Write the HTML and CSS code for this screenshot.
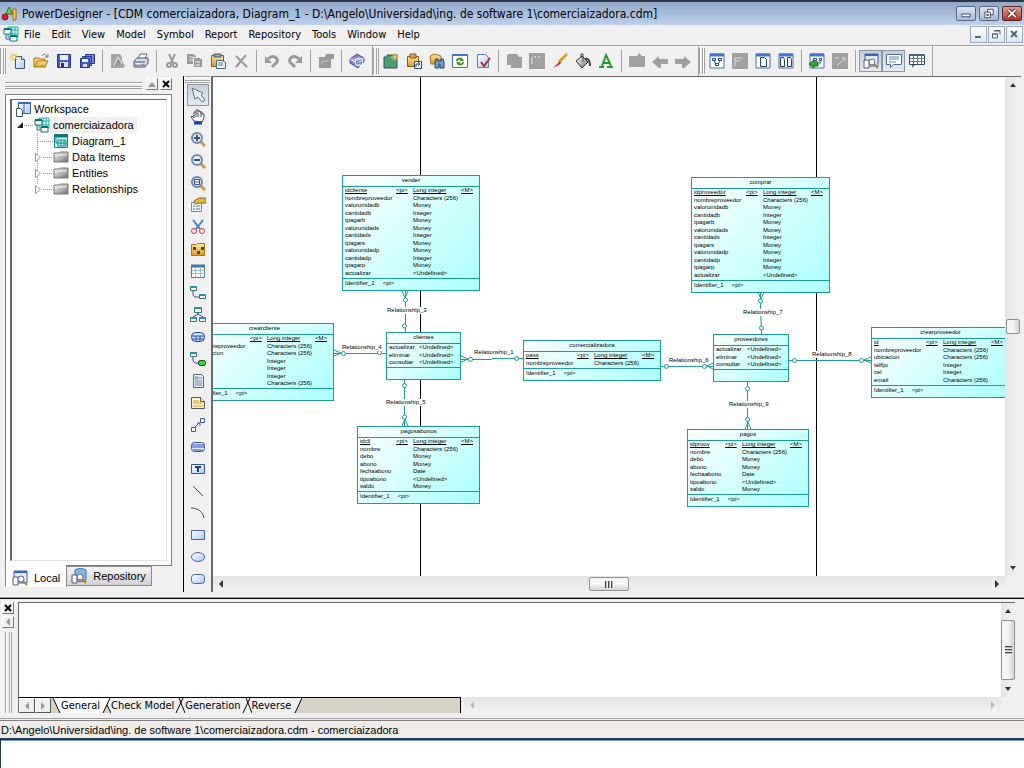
FILE: index.html
```html
<!doctype html>
<html lang="en">
<head>
<meta charset="utf-8">
<title>PowerDesigner</title>
<link rel="stylesheet" href="styles.css">
</head>

<body>
    <!-- gradients and shapes used more than once -->
    <svg class="defs" width="0" height="0">
        <defs>
            <linearGradient id="blue" x1="0" y1="0" x2="1" y2="1"><stop offset="0" stop-color="#fff"/><stop offset="1" stop-color="#a9c8f8"/></linearGradient>
            <linearGradient id="grey" x1="0" y1="0" x2="1" y2="1"><stop offset="0" stop-color="#fff"/><stop offset="1" stop-color="#707070"/></linearGradient>
            <linearGradient id="gold" x1="0" y1="0" x2="0" y2="1"><stop offset="0" stop-color="#ffe9a0"/><stop offset="1" stop-color="#d89a20"/></linearGradient>
            <symbol id="folder" viewBox="0 0 16 16"><path d="M1 4h5l1-1h8v10H1z" fill="url(#grey)" stroke="#777"/><path d="M2 6h12" stroke="#eee"/></symbol>
            <symbol id="model" viewBox="0 0 16 16"><path d="M5 1h10v10H5z" fill="#e4ffff" stroke="#2aa"/><path d="M5 4h10M5 8h10M9 1v10M12 1v10" stroke="#2aa"/><path d="M1 3h7v5H1zM7 10h7v5H7z" fill="#fff" stroke="#177"/><path d="M1 3h7M7 10h7" stroke="#077" stroke-width="2"/><path d="M3 8v5h4" fill="none" stroke="#35a"/></symbol>
            <symbol id="look" viewBox="0 0 16 16"><path d="M2 1h13v12H2z" fill="#dfeafc" stroke="#3a5fae"/><path d="M2 2h13" stroke="#3566d0" stroke-width="2"/><path d="M1 7h5v8H1z" fill="#fff" stroke="#557"/><circle cx="9" cy="9" r="3" fill="#eef8ff" stroke="#667"/><path d="M11 11l4 4" stroke="#b8792a" stroke-width="2"/></symbol>
            <symbol id="zoom" viewBox="0 0 16 16"><path d="M10 10l5 5" stroke="#c89b3c" stroke-width="3"/><circle cx="7" cy="7" r="5" fill="#e3f0ff" stroke="#7486a8" stroke-width="2"/></symbol>
            <symbol id="win" viewBox="0 0 16 16"><path d="M1 1h14v14H1z" fill="#fff" stroke="#4a6cb4"/><path d="M1 2h14" stroke="#3f74d8" stroke-width="3"/></symbol>
        </defs>
    </svg>

    <header class="title-bar">
        <svg class="icon" viewBox="0 0 16 16"><path d="M5 8l3-7 4 7z" fill="#7c4" stroke="#272"/><circle cx="4" cy="11" r="3" fill="#d22" stroke="#811"/><path d="M12 3h3v11h-3z" fill="#fc5" stroke="#a60"/></svg>
        <h1>PowerDesigner - [CDM comerciaizadora, Diagram_1 - D:\Angelo\Universidad\ing. de software 1\comerciaizadora.cdm]</h1>
        <div class="win-buttons">
            <button title="Minimize"><svg viewBox="0 0 18 14"><path d="M4.500 7.500h9v3h-9z" fill="#fff" stroke="#445"/></svg></button>
            <button title="Restore"><svg viewBox="0 0 18 14"><path d="M7.500 2.500h6v6h-6z" fill="#fff" stroke="#445"/><path d="M4.500 5.500h6v6h-6zM6.500 8h2v1h-2z" fill="#fff" stroke="#445"/></svg></button>
            <button class="close" title="Close"><svg viewBox="0 0 18 14"><path d="M5 3l8 8M13 3l-8 8" stroke="#522" stroke-width="4"/><path d="M5 3l8 8M13 3l-8 8" stroke="#fff" stroke-width="2"/></svg></button>
        </div>
    </header>

    <nav class="menu">
        <svg class="icon"><use href="#model"/></svg>
        <a href="#">File</a>
        <a href="#">Edit</a>
        <a href="#">View</a>
        <a href="#">Model</a>
        <a href="#">Symbol</a>
        <a href="#">Report</a>
        <a href="#">Repository</a>
        <a href="#">Tools</a>
        <a href="#">Window</a>
        <a href="#">Help</a>
        <div class="mdi-buttons">
            <button title="Minimize"><svg viewBox="0 0 14 14"><path d="M4 10h6" stroke="#567" stroke-width="2"/></svg></button>
            <button title="Restore"><svg viewBox="0 0 14 14"><path d="M5 3.500h6v4M3.500 7h5v4h-5z" fill="none" stroke="#567"/><path d="M5 4h6M3 7h6" stroke="#567"/></svg></button>
            <button title="Close"><svg viewBox="0 0 14 14"><path d="M4 4l6 6M10 4l-6 6" stroke="#567" stroke-width="2"/></svg></button>
        </div>
    </nav>

    <div class="toolbars">
        <div class="band">
            <button title="New"><svg viewBox="0 0 16 16"><path d="M5.500 3.500h6l3 3v9h-9z" fill="url(#blue)" stroke="#456"/><path d="M11.500 3.500v3h3" fill="#fff" stroke="#456"/><path d="M4 0v8M0 4h8M1 1l6 6M7 1L1 7" stroke="#e8b020"/><circle cx="4" cy="4" r="1.500" fill="#fff6b0"/></svg></button>
            <button title="Open"><svg viewBox="0 0 16 16"><path d="M1 14V5h5l1 1h5v3" fill="#f5cd60" stroke="#a67a18"/><path d="M1 14l4-6h10l-3 6z" fill="url(#gold)" stroke="#a67a18"/><path d="M9 3c2-3 4-2 5 1M12 4h3V1" fill="none" stroke="#579"/></svg></button>
            <button title="Save"><svg viewBox="0 0 16 16"><path d="M1.500 1.500h13v13h-13z" fill="#4a5cc8" stroke="#223a90"/><path d="M4 2h8v5H4z" fill="#e8f0ff"/><path d="M4 9h8v5H4z" fill="#dde"/><path d="M5 10h3v4H5z" fill="#335"/></svg></button>
            <button title="Save All"><svg viewBox="0 0 16 16"><path d="M6.500 1.500h9v9h-9zM3.500 3.500h9v9h-9z" fill="#7a86da" stroke="#223a90"/><path d="M1.500 5.500h9v9h-9z" fill="#4a5cc8" stroke="#223a90"/><path d="M3 6h6v3H3z" fill="#e8f0ff"/><path d="M4 11h4v3H4z" fill="#dde"/></svg></button>
            <i></i>
            <button title="Print Preview"><svg viewBox="0 0 16 16"><path d="M1 1h9l2 3v4l3 5-2 2H1z" fill="#a6a6a6"/><path d="M4 13l4-9 4 7" fill="#939393" stroke="#eee"/></svg></button>
            <button title="Print"><svg viewBox="0 0 16 16"><path d="M5 6l2-5h7l-2 5z" fill="#fff" stroke="#567"/><path d="M1 8l3-3h11v5l-3 4H1z" fill="#cfdbe8" stroke="#456"/><path d="M2 9h10M2 12h10" stroke="#456"/><path d="M3 11h5" stroke="#fff"/></svg></button>
            <i></i>
            <button title="Cut"><svg viewBox="0 0 16 16" fill="none" stroke="#999" stroke-width="2"><path d="M5 1l4 9M11 1L7 10"/><circle cx="5" cy="12" r="2"/><circle cx="11" cy="12" r="2"/></svg></button>
            <button title="Copy"><svg viewBox="0 0 16 16"><path d="M0 1h6l3 2v8H0z" fill="#999"/><path d="M6.500 4.500h6l3 2v8h-9z" fill="#999" stroke="#eee"/><path d="M8 9h5M8 12h5M2 4h4M2 7h4" stroke="#eee"/></svg></button>
            <button title="Paste"><svg viewBox="0 0 16 16"><path d="M1.500 2.500h12v11h-12z" fill="url(#gold)" stroke="#8a6010"/><path d="M4 1h7v3H4z" fill="#9ab" stroke="#456"/><path d="M6.500 7.500h6l3 2v6h-9z" fill="#e8f1ff" stroke="#468"/><path d="M8 10h5M8 12h5" stroke="#57a"/></svg></button>
            <button title="Delete"><svg viewBox="0 0 16 16"><path d="M3 3l11 11M13 2L3 14" stroke="#999" stroke-width="2"/></svg></button>
            <i></i>
            <button title="Undo"><svg viewBox="0 0 16 16"><path d="M4 6c5-5 11-1 9 3l-5 5" fill="none" stroke="#999" stroke-width="3"/><path d="M1 3v7h7z" fill="#999"/></svg></button>
            <button title="Redo"><svg viewBox="0 0 16 16"><path d="M12 6C7 1 1 5 3 9l5 5" fill="none" stroke="#999" stroke-width="3"/><path d="M15 3v7H8z" fill="#999"/></svg></button>
            <i></i>
            <button title="Properties"><svg viewBox="0 0 16 16"><path d="M0 4h7l1-3h8v5h-3v9H1V5z" fill="#999"/><path d="M4 8h7M4 8v4" stroke="#bbb"/></svg></button>
            <i></i>
            <button title="Help"><svg viewBox="0 0 16 16"><path d="M1 6l7-5 7 4v4l-6 6-8-5z" fill="#8a84d0" stroke="#544b9c"/><path d="M1 6l7 4 7-5" fill="#b9b4ee" stroke="#eef"/><circle cx="10" cy="9" r="4" fill="#7d8fe0" stroke="#fff"/><path d="M8.500 8c0-2 3-2 3 0l-1.500 1.500M10 11v1" fill="none" stroke="#fff"/></svg></button>
        </div>
        <div class="band">
            <button title="New Package"><svg viewBox="0 0 16 16"><path d="M1 4h3V2h10v13H1z" fill="#5b9b80" stroke="#255"/><path d="M3 6h9v8H3z" fill="#4a9a70"/><path d="M12 0v8M8 4h8M9 1l6 6M15 1L9 7" stroke="#f5c840"/></svg></button>
            <button title="Paste as Shortcut"><svg viewBox="0 0 16 16"><path d="M1.500 3.500h11v10h-11z" fill="url(#gold)" stroke="#8a6010"/><path d="M4 1h6v4H4z" fill="#ca6" stroke="#852"/><path d="M8.500 8.500h7v7h-7z" fill="#fff" stroke="#347"/><path d="M10 14v-3h3M12 9l2 2-2 2" fill="none" stroke="#14a"/></svg></button>
            <button title="Find"><svg viewBox="0 0 16 16"><path d="M1 3l4-2 7 2v8H2z" fill="url(#gold)" stroke="#a67a18"/><path d="M6 9l1-3h2v2h3V6h2l1 3v6h-4v-4h-1v4H6z" fill="#6f9ae0" stroke="#245"/></svg></button>
            <button title="Refresh"><svg viewBox="0 0 16 16"><path d="M.5 1.500h15v13H.5z" fill="#fff" stroke="#4a6cb4"/><path d="M0 2h16" stroke="#3f74d8" stroke-width="2"/><path d="M5 8c0-3 4-3 5-1M11 9c0 3-4 3-5 1" fill="none" stroke="#492" stroke-width="2"/><path d="M9 4l3 4H8zM7 13l-3-4h4z" fill="#492"/></svg></button>
            <button title="Check Model"><svg viewBox="0 0 16 16"><path d="M2.500 1.500h8l3 3v10h-11z" fill="url(#blue)" stroke="#5580c0"/><path d="M6 9l3 4 6-8" fill="none" stroke="#b22a3a" stroke-width="2"/></svg></button>
            <i></i>
            <button title="Bring Forward"><svg viewBox="0 0 16 16"><path d="M1 2l2-1h8l2 3h3v11H5v-3H1z" fill="#a0a0a0"/></svg></button>
            <button title="Send Back"><svg viewBox="0 0 16 16"><path d="M0 0h16v16H0z" fill="#a0a0a0"/><path d="M3 4v7M5 4h2M9 4h2" stroke="#eee"/></svg></button>
            <button title="Line Style"><svg viewBox="0 0 16 16"><path d="M15 1L7 9" stroke="#e2a020" stroke-width="3"/><path d="M8 8l-7 7 6-3 2-2z" fill="#c33"/></svg></button>
            <button title="Fill Color"><svg viewBox="0 0 16 16"><path d="M1 8l6-5 6 6-6 6z" fill="url(#grey)" stroke="#333"/><path d="M8 9V1H6v4" fill="none" stroke="#345"/><path d="M10 6c4-1 5 3 5 7" fill="none" stroke="#345" stroke-width="2"/></svg></button>
            <button title="Font"><svg viewBox="0 0 16 16"><path d="M1 14h5M9 14h6M4 13l4-11 5 11M5 10h6" fill="none" stroke="#279a3c" stroke-width="2"/></svg></button>
            <i></i>
            <button title="Up"><svg viewBox="0 0 16 16"><path d="M0 3h8l2-3 3 3h3v11H0z" fill="#a0a0a0"/></svg></button>
            <button title="Back"><svg viewBox="0 0 16 16"><path d="M0 9l7-6v3h9v5H9v4H7z" fill="#a0a0a0"/></svg></button>
            <button title="Forward"><svg viewBox="0 0 16 16"><path d="M16 9L9 3v3H0v5h7v4h2z" fill="#a0a0a0"/></svg></button>
        </div>
        <div class="band">
            <button title="Diagram"><svg viewBox="0 0 16 16"><use href="#win"/><path d="M3.500 5.500h3v2h-3zM9.500 5.500h3v2h-3zM6.500 10.500h3v2h-3zM5 8l2 3M11 8l-2 3" fill="none" stroke="#24a"/></svg></button>
            <button title="Model View"><svg viewBox="0 0 16 16"><path d="M0 0h16v16H0z" fill="#a0a0a0"/><path d="M3 5v8M3 5h7M4 8h4" stroke="#ddd"/></svg></button>
            <button title="Report"><svg viewBox="0 0 16 16"><use href="#win"/><path d="M5.500 4.500h4l2 2v7h-6z" fill="#fff" stroke="#246"/></svg></button>
            <button title="Multimodel Report"><svg viewBox="0 0 16 16"><use href="#win"/><path d="M2.500 4.500h3l1 2v7h-4zM9.500 4.500h3l1 2v7h-4z" fill="#fff" stroke="#246"/></svg></button>
            <i></i>
            <button title="Import"><svg viewBox="0 0 16 16"><use href="#win"/><path d="M4.500 5.500h3v2h-3zM10.500 5.500h2v2h-2zM11 8v3" fill="none" stroke="#24a"/><path d="M0 11l5-4v2h4v4H5v2z" fill="#3a3" stroke="#161"/></svg></button>
            <button title="Export"><svg viewBox="0 0 16 16"><path d="M0 0h16v16H0z" fill="#a0a0a0"/><path d="M3 5h4M5 13l7-7M10 5h3v3" stroke="#ddd" fill="none"/></svg></button>
            <i></i>
            <button class="pressed" title="Browser"><svg viewBox="0 0 16 16"><use href="#look"/></svg></button>
            <button class="pressed" title="Output"><svg viewBox="0 0 16 16"><path d="M.5 1.500h15v10h-8l-3 3v-3h-4z" fill="#fff" stroke="#4a6a98"/><path d="M3 4h10M3 6h10M3 9h7" stroke="#68a"/></svg></button>
            <button title="Result List"><svg viewBox="0 0 16 16"><path d="M.5 1.500h15v10H.5z" fill="#fff" stroke="#346"/><path d="M0 2h16" stroke="#468" stroke-width="2"/><path d="M1 5.500h14M1 8.500h14M4.500 3v8M8.500 3v8M12.500 3v8" stroke="#579"/><path d="M3 12v3l3-3" fill="#579"/></svg></button>
        </div>
    </div>

    <main class="workbench">
        <aside class="browser">
            <div class="browser-head">
                <div class="grip"></div>
                <button class="tiny" title="Maximize"><svg viewBox="0 0 10 10"><path d="M1 8l4-5 4 5z" fill="#999"/></svg></button>
                <button class="tiny" title="Close"><svg viewBox="0 0 10 10"><path d="M2 2l6 6M8 2L2 8" stroke="#000" stroke-width="2"/></svg></button>
            </div>
            <div class="tree-frame">
                <ul class="tree">
                    <li><svg class="icon" viewBox="0 0 16 16"><path d="M3.500 1.500h12v11h-12z" fill="url(#blue)" stroke="#3a62b4"/><path d="M3 2h13" stroke="#3566d0" stroke-width="2"/><path d="M9 3v9" stroke="#3566d0"/><path d="M1.500 7.500h4l2 2v6h-6z" fill="#fff" stroke="#456"/></svg><span>Workspace</span></li>
                    <li class="level1"><svg class="arrow" viewBox="0 0 19 16"><path d="M2 11h6V5z" fill="#222"/><path d="M9 8.500h10" stroke="#999" stroke-dasharray="1 1"/></svg><svg class="icon"><use href="#model"/></svg><span class="current">comerciaizadora</span></li>
                    <li class="level2"><svg class="arrow" viewBox="0 0 19 16"><path d="M3.500 0v16M4 8.500h15" stroke="#999" stroke-dasharray="1 1"/></svg><svg class="icon" viewBox="0 0 16 16"><path d="M1.500 1.500h13v13h-13z" fill="#bff" stroke="#188"/><path d="M1 3h14" stroke="#177" stroke-width="3"/><path d="M5 7h8v6H5zM5 10h8M8 7v6M11 7v6M3 5v5h2" fill="none" stroke="#188"/></svg><span>Diagram_1</span></li>
                    <li class="level2"><svg class="arrow" viewBox="0 0 19 16"><path d="M3.500 0v16M9 8.500h10" stroke="#999" stroke-dasharray="1 1"/><path d="M1.500 4.500v8l5-4z" fill="#fff" stroke="#999"/></svg><svg class="icon"><use href="#folder"/></svg><span>Data Items</span></li>
                    <li class="level2"><svg class="arrow" viewBox="0 0 19 16"><path d="M3.500 0v16M9 8.500h10" stroke="#999" stroke-dasharray="1 1"/><path d="M1.500 4.500v8l5-4z" fill="#fff" stroke="#999"/></svg><svg class="icon"><use href="#folder"/></svg><span>Entities</span></li>
                    <li class="level2"><svg class="arrow" viewBox="0 0 19 16"><path d="M3.500 0v4M9 8.500h10" stroke="#999" stroke-dasharray="1 1"/><path d="M1.500 4.500v8l5-4z" fill="#fff" stroke="#999"/></svg><svg class="icon"><use href="#folder"/></svg><span>Relationships</span></li>
                </ul>
            </div>
            <div class="browser-tabs">
                <button class="active"><svg class="icon"><use href="#look"/></svg>Local</button>
                <button><svg class="icon" viewBox="0 0 16 16"><path d="M4 2c3-2 8-2 11 0v10c-3 2-8 2-11 0z" fill="#7db8e8" stroke="#479"/><path d="M1 7h5v8H1z" fill="#fff" stroke="#557"/><circle cx="9" cy="9" r="3" fill="#eef8ff" stroke="#667"/><path d="M11 11l4 4" stroke="#b8792a" stroke-width="2"/></svg>Repository</button>
            </div>
        </aside>

        <div class="palette">
            <div class="grip"></div>
            <button class="pressed" title="Pointer"><svg viewBox="0 0 16 16"><path d="M2 1l3 11 3-2 4 5 3-2-4-5 2-2z" fill="#e8f2f6" stroke="#667"/></svg></button>
            <button title="Grabber"><svg viewBox="0 0 16 16"><path d="M4 12L1 8l1-1 2 2V3l2 0V1h2v1h2v1h2v2h2v4l-2 4z" fill="#fff" stroke="#446"/><path d="M6 3v5M8 2v6M11 3v5" stroke="#446"/><path d="M4 14h8" stroke="#14a" stroke-width="3"/></svg></button>
            <button title="Zoom In"><svg viewBox="0 0 16 16"><use href="#zoom"/><path d="M4 7h6M7 4v6" stroke="#357" stroke-width="2"/></svg></button>
            <button title="Zoom Out"><svg viewBox="0 0 16 16"><use href="#zoom"/><path d="M4 7h6" stroke="#357" stroke-width="2"/></svg></button>
            <button title="Open Diagram"><svg viewBox="0 0 16 16"><use href="#zoom"/><path d="M4.500 4.500h5v5h-5zM4 7h6" fill="#fff" stroke="#35b"/></svg></button>
            <button title="Properties"><svg viewBox="0 0 16 16"><path d="M1.500 5.500h10v9h-10z" fill="#eef4fc" stroke="#789"/><path d="M3 9h2M6 9h4M3 12h2M6 12h4" stroke="#579"/><path d="M4 4l5-3h7v5H9l-4 1z" fill="#e5b93c" stroke="#862"/></svg></button>
            <button title="Delete"><svg viewBox="0 0 16 16" fill="none"><path d="M3 1l7 9M13 1L6 10" stroke="#38c" stroke-width="2"/><circle cx="4" cy="12" r="2.500" stroke="#d33"/><circle cx="12" cy="12" r="2.500" stroke="#d33"/></svg></button>
            <button title="Package"><svg viewBox="0 0 16 16"><path d="M1.500 3.500h5l1-1h7v12h-13z" fill="url(#gold)" stroke="#a67a18"/><path d="M3 6h3v3H3zM11 6h3v3h-3zM7 10h3v3H7z" fill="#543"/></svg></button>
            <button title="Entity"><svg viewBox="0 0 16 16"><path d="M1.500 2.500h13v12h-13z" fill="#fff" stroke="#57a"/><path d="M1 3h14" stroke="#47a" stroke-width="3"/><path d="M2 7.500h13M2 10.500h13M5.500 4v10M10.500 4v10" stroke="#9bd"/></svg></button>
            <button title="Relationship"><svg viewBox="0 0 16 16"><path d="M.5 1.500h6v4h-6zM9.500 9.500h6v4h-6z" fill="#fff" stroke="#377"/><path d="M0 2h7M9 10h7" stroke="#299" stroke-width="2"/><path d="M3 6v4l2 2h4" fill="none" stroke="#44a"/></svg></button>
            <button title="Inheritance"><svg viewBox="0 0 16 16"><path d="M4.500.5h7v5h-7zM.5 10.500h6v4h-6zM9.500 10.500h6v4h-6z" fill="#fff" stroke="#377"/><path d="M4 1h8M0 11h7M9 11h7" stroke="#299" stroke-width="2"/><path d="M8 6v2M3 10l5-3 5 3" fill="none" stroke="#44a"/></svg></button>
            <button title="Association"><svg viewBox="0 0 16 16"><rect x="1.500" y="3.500" width="13" height="9" rx="4" fill="#bef" stroke="#34a"/><path d="M1 7h14M2 10h12M6 7v5M10 7v5" stroke="#34a"/></svg></button>
            <button title="Association Link"><svg viewBox="0 0 16 16"><path d="M.5 1.500h6v4h-6z" fill="#fff" stroke="#377"/><path d="M0 2h7" stroke="#299" stroke-width="2"/><path d="M3 6v4l2 2h4" fill="none" stroke="#44a"/><rect x="8.500" y="9.500" width="7" height="5" rx="2" fill="#3d3" stroke="#141"/></svg></button>
            <button title="File"><svg viewBox="0 0 16 16"><path d="M3.500 1.500h8l2 2v11h-10z" fill="#e4edf4" stroke="#567"/><path d="M5 4h3v2H5zM9 5h3M5 8h7M5 10h7M5 12h7" fill="none" stroke="#789"/></svg></button>
            <button title="Note"><svg viewBox="0 0 16 16"><path d="M1.500 2.500h9l4 4v7h-13z" fill="#fff3c0" stroke="#557"/><path d="M10.500 2.500v4h4" fill="#fff" stroke="#557"/><path d="M3 6h6M3 8h10M3 11h10" stroke="#e09a20"/></svg></button>
            <button title="Link"><svg viewBox="0 0 16 16"><path d="M1.500 10.500h4v4h-4zM10.500 1.500h4v4h-4z" fill="#fff" stroke="#35a"/><path d="M5 10l4-4M7 6h3v3" fill="none" stroke="#35a"/></svg></button>
            <button title="Title"><svg viewBox="0 0 16 16"><rect x="1.500" y="3.500" width="13" height="9" rx="3" fill="#def" stroke="#35a"/><path d="M2 6h12M2 8h12M3 11h10" stroke="#35a"/></svg></button>
            <button title="Text"><svg viewBox="0 0 16 16"><path d="M1.500 3.500h13v9h-13z" fill="url(#blue)" stroke="#35a"/><path d="M5 6h6M8 5v6" stroke="#246" stroke-width="2"/></svg></button>
            <button title="Line"><svg viewBox="0 0 16 16"><path d="M3 3l10 10" stroke="#446"/></svg></button>
            <button title="Arc"><svg viewBox="0 0 16 16"><path d="M1 3c7 0 12 4 13 10" fill="none" stroke="#446"/></svg></button>
            <button title="Rectangle"><svg viewBox="0 0 16 16"><path d="M1.500 3.500h13v9h-13z" fill="url(#blue)" stroke="#46a"/></svg></button>
            <button title="Ellipse"><svg viewBox="0 0 16 16"><ellipse cx="8" cy="8" rx="6.500" ry="4.500" fill="url(#blue)" stroke="#46a"/></svg></button>
            <button title="Rounded Rectangle"><svg viewBox="0 0 16 16"><rect x="1.500" y="3.500" width="13" height="9" rx="3" fill="url(#blue)" stroke="#46a"/></svg></button>
        </div>

        <section class="editor">
            <div class="diagram">
                <svg class="links">
                    <path class="page-break" d="M207.500 0v2000M603.500 0v2000"/>
                    <g class="link">
                        <path d="M192.500 214v41M189 214l3 7 3-7"/><circle cx="192.500" cy="223" r="2"/><circle cx="191.500" cy="249" r="2"/>
                        <path d="M121 276.500h52M121 273l7 3-7 3"/><circle cx="130.500" cy="276.500" r="2"/><circle cx="166.500" cy="275.500" r="2"/>
                        <path d="M191.500 303v46M189 349l3-7 3 7"/><circle cx="191.500" cy="308.500" r="2"/><circle cx="191.500" cy="340" r="2"/>
                        <path d="M248 282.500h30l2-1h30M248 279l7 3-7 3"/><circle cx="257.500" cy="282.500" r="2"/><circle cx="303.500" cy="281.500" r="2"/>
                        <path d="M448 289.500h52M500 286l-6 3 6 3"/><circle cx="453.500" cy="289.500" r="2"/><circle cx="491.500" cy="289.500" r="2"/>
                        <path d="M547.500 215v14l1 28M545 215l3 7 3-7"/><circle cx="547.500" cy="224" r="2"/><circle cx="548.500" cy="251" r="2"/>
                        <path d="M576 283.500h82M658 280l-7 3 7 3"/><circle cx="581.500" cy="283.500" r="2"/><circle cx="648.500" cy="283.500" r="2"/>
                        <path d="M534.500 305v47M532 352l3-7 3 7"/><circle cx="534.500" cy="311.500" r="2"/><circle cx="534.500" cy="342.500" r="2"/>
                    </g>
                </svg>

                <span class="link-name r3">Relationship_3</span>
                <span class="link-name r4">Relationship_4</span>
                <span class="link-name r5">Relationship_5</span>
                <span class="link-name r1">Relationship_1</span>
                <span class="link-name r6">Relationship_6</span>
                <span class="link-name r7">Relationship_7</span>
                <span class="link-name r8">Relationship_8</span>
                <span class="link-name r9">Relationship_9</span>

                <div class="entity vender">
                    <h2>vender</h2>
                    <table>
                        <tr class="key"><td><u>idcliente</u></td><td><u>&lt;pi&gt;</u></td><td><u>Long integer</u></td><td><u>&lt;M&gt;</u></td></tr>
                        <tr><td>nombreproveedor</td><td></td><td>Characters (256)</td><td></td></tr>
                        <tr><td>valorunidadb</td><td></td><td>Money</td><td></td></tr>
                        <tr><td>cantidadb</td><td></td><td>Integer</td><td></td></tr>
                        <tr><td>tpagarb</td><td></td><td>Money</td><td></td></tr>
                        <tr><td>valorunidads</td><td></td><td>Money</td><td></td></tr>
                        <tr><td>cantidads</td><td></td><td>Integer</td><td></td></tr>
                        <tr><td>tpagars</td><td></td><td>Money</td><td></td></tr>
                        <tr><td>valorunidadp</td><td></td><td>Money</td><td></td></tr>
                        <tr><td>cantidadp</td><td></td><td>Integer</td><td></td></tr>
                        <tr><td>tpagarp</td><td></td><td>Money</td><td></td></tr>
                        <tr><td>actualizar</td><td></td><td>&lt;Undefined&gt;</td><td></td></tr>
                    </table>
                    <p>Identifier_1<span>&lt;pi&gt;</span></p>
                </div>

                <div class="entity comprar">
                    <h2>comprar</h2>
                    <table>
                        <tr class="key"><td><u>idproveedor</u></td><td><u>&lt;pi&gt;</u></td><td><u>Long integer</u></td><td><u>&lt;M&gt;</u></td></tr>
                        <tr><td>nombreproveedor</td><td></td><td>Characters (256)</td><td></td></tr>
                        <tr><td>valorunidadb</td><td></td><td>Money</td><td></td></tr>
                        <tr><td>cantidadb</td><td></td><td>Integer</td><td></td></tr>
                        <tr><td>tpagarb</td><td></td><td>Money</td><td></td></tr>
                        <tr><td>valorunidads</td><td></td><td>Money</td><td></td></tr>
                        <tr><td>cantidads</td><td></td><td>Integer</td><td></td></tr>
                        <tr><td>tpagars</td><td></td><td>Money</td><td></td></tr>
                        <tr><td>valorunidadp</td><td></td><td>Money</td><td></td></tr>
                        <tr><td>cantidadp</td><td></td><td>Integer</td><td></td></tr>
                        <tr><td>tpagarp</td><td></td><td>Money</td><td></td></tr>
                        <tr><td>actualizar</td><td></td><td>&lt;Undefined&gt;</td><td></td></tr>
                    </table>
                    <p>Identifier_1<span>&lt;pi&gt;</span></p>
                </div>

                <div class="entity crearcliente">
                    <h2>crearcliente</h2>
                    <table>
                        <tr class="key"><td></td><td><u>&lt;pi&gt;</u></td><td><u>Long integer</u></td><td><u>&lt;M&gt;</u></td></tr>
                        <tr><td>nombreproveedor</td><td></td><td>Characters (256)</td><td></td></tr>
                        <tr><td>ubicacion</td><td></td><td>Characters (256)</td><td></td></tr>
                        <tr><td>telfija</td><td></td><td>Integer</td><td></td></tr>
                        <tr><td></td><td></td><td>Integer</td><td></td></tr>
                        <tr><td></td><td></td><td>Integer</td><td></td></tr>
                        <tr><td></td><td></td><td>Characters (256)</td><td></td></tr>
                    </table>
                    <p>Identifier_1<span>&lt;pi&gt;</span></p>
                </div>

                <div class="entity small clientes">
                    <h2>clientes</h2>
                    <table>
                        <tr><td>actualizar</td><td>&lt;Undefined&gt;</td></tr>
                        <tr><td>eliminar</td><td>&lt;Undefined&gt;</td></tr>
                        <tr><td>consultar</td><td>&lt;Undefined&gt;</td></tr>
                    </table>
                    <p></p>
                </div>

                <div class="entity pagosabonos">
                    <h2>pagosabonos</h2>
                    <table>
                        <tr class="key"><td><u>idcli</u></td><td><u>&lt;pi&gt;</u></td><td><u>Long integer</u></td><td><u>&lt;M&gt;</u></td></tr>
                        <tr><td>nombre</td><td></td><td>Characters (256)</td><td></td></tr>
                        <tr><td>debo</td><td></td><td>Money</td><td></td></tr>
                        <tr><td>abono</td><td></td><td>Money</td><td></td></tr>
                        <tr><td>fechaabono</td><td></td><td>Date</td><td></td></tr>
                        <tr><td>tipoabono</td><td></td><td>&lt;Undefined&gt;</td><td></td></tr>
                        <tr><td>saldo</td><td></td><td>Money</td><td></td></tr>
                    </table>
                    <p>Identifier_1<span>&lt;pi&gt;</span></p>
                </div>

                <div class="entity comercializadora">
                    <h2>comercializadora</h2>
                    <table>
                        <tr class="key"><td><u>pass</u></td><td><u>&lt;pi&gt;</u></td><td><u>Long integer</u></td><td><u>&lt;M&gt;</u></td></tr>
                        <tr><td>nombreproveedor</td><td></td><td>Characters (256)</td><td></td></tr>
                    </table>
                    <p>Identifier_1<span>&lt;pi&gt;</span></p>
                </div>

                <div class="entity small proveedores">
                    <h2>proveedores</h2>
                    <table>
                        <tr><td>actualizar</td><td>&lt;Undefined&gt;</td></tr>
                        <tr><td>eliminar</td><td>&lt;Undefined&gt;</td></tr>
                        <tr><td>consultar</td><td>&lt;Undefined&gt;</td></tr>
                    </table>
                    <p></p>
                </div>

                <div class="entity crearproveedor">
                    <h2>crearproveedor</h2>
                    <table>
                        <tr class="key"><td><u>id</u></td><td><u>&lt;pi&gt;</u></td><td><u>Long integer</u></td><td><u>&lt;M&gt;</u></td></tr>
                        <tr><td>nombreproveedor</td><td></td><td>Characters (256)</td><td></td></tr>
                        <tr><td>ubicacion</td><td></td><td>Characters (256)</td><td></td></tr>
                        <tr><td>telfijo</td><td></td><td>Integer</td><td></td></tr>
                        <tr><td>cel</td><td></td><td>Integer</td><td></td></tr>
                        <tr><td>email</td><td></td><td>Characters (256)</td><td></td></tr>
                    </table>
                    <p>Identifier_1<span>&lt;pi&gt;</span></p>
                </div>

                <div class="entity pagos">
                    <h2>pagos</h2>
                    <table>
                        <tr class="key"><td><u>idproov</u></td><td><u>&lt;pi&gt;</u></td><td><u>Long integer</u></td><td><u>&lt;M&gt;</u></td></tr>
                        <tr><td>nombre</td><td></td><td>Characters (256)</td><td></td></tr>
                        <tr><td>debo</td><td></td><td>Money</td><td></td></tr>
                        <tr><td>abono</td><td></td><td>Money</td><td></td></tr>
                        <tr><td>fechaabono</td><td></td><td>Date</td><td></td></tr>
                        <tr><td>tipoabono</td><td></td><td>&lt;Undefined&gt;</td><td></td></tr>
                        <tr><td>saldo</td><td></td><td>Money</td><td></td></tr>
                    </table>
                    <p>Identifier_1<span>&lt;pi&gt;</span></p>
                </div>
            </div>
            <div class="scroll-v">
                <svg viewBox="0 0 16 16"><path d="M5 10l3-4 3 4z"/></svg>
                <div class="thumb"></div>
                <svg viewBox="0 0 16 16"><path d="M5 6l3 4 3-4z"/></svg>
            </div>
            <div class="scroll-h">
                <svg viewBox="0 0 16 16"><path d="M10 4L6 8l4 4z"/></svg>
                <div class="thumb"><b></b><b></b><b></b></div>
                <svg viewBox="0 0 16 16"><path d="M6 4l4 4-4 4z"/></svg>
            </div>
        </section>
    </main>

    <section class="output">
        <div class="output-side">
            <button class="tiny" title="Close"><svg viewBox="0 0 10 10"><path d="M2 2l6 6M8 2L2 8" stroke="#000" stroke-width="2"/></svg></button>
            <button class="tiny" title="Collapse"><svg viewBox="0 0 10 10"><path d="M7 1L3 5l4 4z" fill="#999"/></svg></button>
            <div class="grip-v"></div>
        </div>
        <div class="output-frame">
            <div class="output-text"></div>
            <div class="scroll-v">
                <svg viewBox="0 0 16 16"><path d="M5 10l3-4 3 4z"/></svg>
                <div class="thumb long"><b></b><b></b><b></b></div>
                <svg viewBox="0 0 16 16"><path d="M5 6l3 4 3-4z"/></svg>
            </div>
            <div class="output-bottom">
                <div class="sheet-tabs">
                    <button class="step" title="Previous"><svg viewBox="0 0 10 10"><path d="M7 1L3 5l4 4z" fill="#999"/></svg></button>
                    <button class="step" title="Next"><svg viewBox="0 0 10 10"><path d="M3 1l4 4-4 4z" fill="#999"/></svg></button>
                    <svg class="slant" viewBox="0 0 10 15"><path d="M2 0h8v15H9z" fill="#fff"/><path d="M2 0l7 15"/></svg>
                    <button class="sheet active">General</button>
                    <svg class="slant" viewBox="0 0 10 15"><path d="M0 0h9L2 15H0z" fill="#fff"/><path d="M9 0h1v15H9L6 7z" fill="#f0f0f0"/><path d="M2 15L9 0M6 7l4 8"/></svg>
                    <button class="sheet">Check Model</button>
                    <svg class="slant" viewBox="0 0 10 15"><path d="M0 0h10v15H0z" fill="#f0f0f0"/><path d="M1 15L8 0M4 0l6 15"/></svg>
                    <button class="sheet">Generation</button>
                    <svg class="slant" viewBox="0 0 10 15"><path d="M0 0h10v15H0z" fill="#f0f0f0"/><path d="M1 15L8 0M4 0l6 15"/></svg>
                    <button class="sheet">Reverse</button>
                    <svg class="slant" viewBox="0 0 10 15"><path d="M0 0h10L3 15H0z" fill="#f0f0f0"/><path d="M3 15l7-15"/></svg>
                </div>
                <div class="scroll-h off">
                    <svg viewBox="0 0 16 16"><path d="M10 4L6 8l4 4z"/></svg>
                    <svg viewBox="0 0 16 16"><path d="M6 4l4 4-4 4z"/></svg>
                </div>
            </div>
        </div>
    </section>

    <footer class="status">D:\Angelo\Universidad\ing. de software 1\comerciaizadora.cdm - comerciaizadora</footer>
    <div class="desktop"></div>
</body>
</html>
```
FILE: styles.css
```css
*,
*:before{
    padding: 0px;
    margin: 0px;
    box-sizing: border-box;
}
body{
    height: 100vh;
    display: flex;
    flex-direction: column;
    overflow: hidden;
    background-color: #f0f0f0;
    color: #000;
    font-family: "DejaVu Sans Condensed", "DejaVu Sans", sans-serif;
    font-size: 11px;
}
button{
    border: none;
    background: none;
    font: inherit;
    color: inherit;
}
svg{
    display: block;
    flex: none;
}
.defs{
    position: absolute;
}
.icon{
    width: 16px;
    height: 16px;
}

/* title bar */
.title-bar{
    height: 25px;
    flex: none;
    display: flex;
    align-items: center;
    gap: 5px;
    padding: 0px 2px 0px 1px;
    border-top: 2px solid #2b3647;
    background: linear-gradient(#91aac8, #bdd1ea);
}
.title-bar h1{
    flex: 1;
    min-width: 0px;
    overflow: hidden;
    white-space: nowrap;
    font-size: 12px;
    font-weight: normal;
}
.win-buttons{
    display: flex;
    gap: 3px;
}
.win-buttons button{
    width: 20px;
    height: 15px;
    border: 1px solid #56677f;
    border-radius: 2px;
    background: linear-gradient(#dbe6f3, #a5bbd6);
}
.win-buttons .close{
    background: linear-gradient(#e0a091, #b8331c);
    border-color: #5a2020;
}
.win-buttons svg{
    width: 18px;
    height: 13px;
}

/* menu */
.menu{
    height: 20px;
    flex: none;
    display: flex;
    align-items: center;
    gap: 11px;
    padding: 0px 1px 2px 3px;
}
.menu .icon{
    margin-right: -6px;
}
.menu a{
    color: #000;
    text-decoration: none;
}
.mdi-buttons{
    display: flex;
    gap: 1px;
    margin-left: auto;
}
.mdi-buttons button{
    width: 17px;
    height: 17px;
    border: 1px solid #9aa9bb;
    background: linear-gradient(#fff, #dce8f4);
}
.mdi-buttons svg{
    width: 14px;
    height: 14px;
}

/* toolbars */
.toolbars{
    height: 31px;
    flex: none;
    display: flex;
    border-top: 1px solid #a0a0a0;
    box-shadow: inset 0px 1px #fff;
}
.band{
    display: flex;
    align-items: center;
    padding-right: 4px;
    border-right: 1px solid #a0a0a0;
}
.band:before{
    content: "";
    width: 6px;
    height: 26px;
    border: solid #a0a0a0;
    border-width: 0px 1px;
    background: linear-gradient(90deg, #fff 1px, #f0f0f0 1px, #f0f0f0 2px, #a0a0a0 2px, #a0a0a0 3px, #fff 3px);
}
.band button{
    width: 23px;
    height: 22px;
    display: flex;
    align-items: center;
    justify-content: center;
}
.band button svg{
    width: 16px;
    height: 16px;
}
.band i{
    width: 1px;
    height: 22px;
    margin: 0px 3px 0px 4px;
    background-color: #a0a0a0;
}
.band .pressed,
.palette .pressed{
    border: 1px solid #8a97a3;
    background: linear-gradient(#c5d0da, #e3e9ee);
}

/* browser panel */
.workbench{
    flex: 1;
    min-height: 0px;
    display: flex;
    padding-bottom: 6px;
}
.browser{
    width: 184px;
    flex: none;
    display: flex;
    flex-direction: column;
    padding: 2px 11px 3px 5px;
    border-right: 1px solid #000;
}
.browser-head{
    height: 16px;
    flex: none;
    display: flex;
    gap: 2px;
}
.grip{
    flex: 1;
    height: 7px;
    margin: 4px 2px 0px 0px;
    border: solid #a0a0a0;
    border-width: 1px 0px;
    background: linear-gradient(#fff 1px, #f0f0f0 1px, #f0f0f0 3px, #a0a0a0 3px, #a0a0a0 4px, #fff 4px);
}
.tiny{
    width: 12px;
    height: 12px;
    border: 1px solid;
    border-color: #fff #777 #777 #fff;
}
.tiny svg{
    width: 10px;
    height: 10px;
}
.tree-frame{
    flex: 1;
    min-height: 0px;
    padding: 4px;
    border: 1px solid #808080;
    background-color: #fff;
}
.tree{
    height: 100%;
    padding: 1px 3px;
    list-style: none;
    border: 1px solid #e3e3e3;
    border-top-color: #696969;
    border-left: 2px solid #696969;
    font-family: "Liberation Sans", sans-serif;
    font-size: 11px;
}
.tree li{
    height: 16px;
    display: flex;
    align-items: center;
    white-space: nowrap;
}
.tree span{
    padding: 0px 3px;
    line-height: 16px;
}
.tree .current{
    background-color: #f0f0f0;
}
.tree .arrow{
    width: 19px;
    height: 16px;
}
.tree .level2{
    padding-left: 19px;
}
.browser-tabs{
    height: 23px;
    flex: none;
    display: flex;
    align-items: flex-start;
    font-family: "Liberation Sans", sans-serif;
    font-size: 11px;
}
.browser-tabs button{
    height: 20px;
    display: flex;
    align-items: center;
    gap: 6px;
    padding: 0px 5px 0px 4px;
    border: solid #8a8a8a;
    border-width: 1px 1px 1px 0px;
    background: linear-gradient(#f4f4f4, #d4d4d4);
}
.browser-tabs .active{
    height: 22px;
    margin-top: -1px;
    padding: 3px 6px 0px 6px;
    border-width: 0px 1px;
    background: #fff;
}

/* drawing palette */
.palette{
    width: 27px;
    flex: none;
    display: flex;
    flex-direction: column;
    align-items: center;
    overflow: hidden;
}
.palette .grip{
    flex: none;
    width: 25px;
    margin: 0px 0px 1px;
}
.palette button{
    width: 22px;
    height: 22px;
    flex: none;
    display: flex;
    align-items: center;
    justify-content: center;
}
.palette svg{
    width: 16px;
    height: 16px;
}

/* diagram window */
.editor{
    flex: 1;
    min-width: 0px;
    display: grid;
    grid-template-columns: 1fr 16px;
    grid-template-rows: 1fr 16px;
    margin-right: 3px;
    border: solid #696969;
    border-width: 1px 0px 0px 2px;
}
.diagram{
    position: relative;
    overflow: hidden;
    background-color: #fff;
    font-family: "Liberation Sans", sans-serif;
    font-size: 6px;
    line-height: 7px;
}
.links{
    position: absolute;
    width: 100%;
    height: 100%;
}
.page-break{
    stroke: #000;
}
.link{
    fill: #fff;
    stroke: #1c9c9c;
}
.link path{
    fill: none;
}
.link-name{
    position: absolute;
    background-color: #fff;
}
.r3{ left: 174px; top: 230px; }
.r4{ left: 129px; top: 267px; }
.r5{ left: 173px; top: 322px; }
.r1{ left: 261px; top: 272px; }
.r6{ left: 456px; top: 280px; }
.r7{ left: 530px; top: 232px; }
.r8{ left: 599px; top: 274px; }
.r9{ left: 516px; top: 324px; }
.entity{
    position: absolute;
    width: 139px;
    border: 1px solid #1c9c9c;
    background: linear-gradient(135deg, #fff, #aaffff);
}
.entity h2{
    height: 11px;
    line-height: 9px;
    border-bottom: 1px solid #1c9c9c;
    font-size: 6px;
    font-weight: normal;
    text-align: center;
}
.entity table{
    width: 100%;
    table-layout: fixed;
    border-spacing: 0px;
    padding-bottom: 1px;
    border-bottom: 1px solid #1c9c9c;
}
.entity td{
    white-space: nowrap;
    line-height: 7px;
}
.entity tr:nth-child(even) td{
    line-height: 8px;
}
.entity td:nth-child(1){
    padding-left: 2px;
}
.entity td:nth-child(2){
    width: 17px;
}
.entity td:nth-child(3){
    width: 48px;
}
.entity td:nth-child(4){
    width: 18px;
}
.small td:nth-child(2){
    width: 41px;
}
.entity p{
    height: 11px;
    padding-left: 2px;
    line-height: 9px;
}
.entity p span{
    margin-left: 8px;
}
.vender{ left: 129px; top: 98px; width: 138px; }
.comprar{ left: 478px; top: 100px; }
.crearcliente{ left: -18px; top: 246px; }
.clientes{ left: 173px; top: 255px; width: 75px; }
.pagosabonos{ left: 144px; top: 349px; width: 123px; }
.comercializadora{ left: 310px; top: 263px; width: 138px; }
.proveedores{ left: 500px; top: 257px; width: 76px; }
.crearproveedor{ left: 658px; top: 250px; }
.pagos{ left: 474px; top: 352px; width: 122px; }

/* scroll bars */
.scroll-v,
.scroll-h{
    display: flex;
    align-items: center;
    justify-content: space-between;
    background: linear-gradient(#e3e3e3, #f2f2f2);
}
.scroll-v{
    flex-direction: column;
    background: linear-gradient(90deg, #e6e6e6, #f2f2f2);
}
.scroll-v svg,
.scroll-h svg{
    width: 16px;
    height: 16px;
    fill: #333;
}
.scroll-h.off svg{
    fill: #bbb;
}
.thumb{
    width: 14px;
    height: 15px;
    border: 1px solid #8f8f8f;
    border-radius: 2px;
    background: linear-gradient(90deg, #f5f5f5 50%, #d2d2d5);
}
.scroll-h .thumb{
    width: 40px;
    height: 14px;
    display: flex;
    align-items: center;
    justify-content: center;
    gap: 1px;
    background: linear-gradient(#f5f5f5 50%, #d2d2d5);
}
.scroll-h .thumb b{
    width: 2px;
    height: 7px;
    border-left: 1px solid #444;
    background-color: #bbb;
}
.thumb.long{
    height: 60px;
    display: flex;
    flex-direction: column;
    align-items: center;
    justify-content: center;
    gap: 1px;
}
.long b{
    width: 7px;
    height: 2px;
    border-top: 1px solid #444;
    background-color: #bbb;
}

/* output window */
.output{
    height: 121px;
    flex: none;
    display: flex;
    padding: 3px 9px 5px 2px;
    border-top: 1px solid #000;
    border-bottom: 1px solid #a0a0a0;
    box-shadow: 0px -1px #a0a0a0;
}
.output-side{
    width: 16px;
    flex: none;
    display: flex;
    flex-direction: column;
    gap: 2px;
}
.grip-v{
    flex: 1;
    width: 7px;
    margin: 2px 0px 0px 3px;
    border: solid #a0a0a0;
    border-width: 0px 1px;
    background: linear-gradient(90deg, #fff 1px, #f0f0f0 1px, #f0f0f0 3px, #a0a0a0 3px, #a0a0a0 4px, #fff 4px);
}
.output-frame{
    flex: 1;
    display: grid;
    grid-template-columns: 1fr 14px;
    grid-template-rows: 1fr 16px;
    border: solid #696969;
    border-width: 1px 0px 0px 1px;
}
.output-text{
    background-color: #fff;
}
.output-bottom{
    display: grid;
    grid-template-columns: 45% 1fr;
    gap: 3px;
    min-width: 0px;
}
.sheet-tabs{
    display: flex;
    border: 1px solid #000;
    border-left: none;
    border-bottom: none;
    background-color: #d6d2c8;
}
.step{
    width: 16px;
    display: flex;
    align-items: center;
    justify-content: center;
    border: 1px solid;
    border-color: #fff #555 #555 #fff;
    background-color: #f0f0f0;
}
.step svg{
    width: 10px;
    height: 10px;
}
.slant{
    width: 10px;
    height: 15px;
    fill: none;
}
.slant path:last-child{
    stroke: #000;
}
.sheet{
    padding: 0px 1px 0px 0px;
    line-height: 14px;
    background-color: #f0f0f0;
}
.sheet.active{
    background-color: #fff;
}

.status{
    height: 18px;
    flex: none;
    margin-top: 1px;
    padding-left: 1px;
    border-top: 1px solid #808080;
    line-height: 18px;
    background-color: #f0ecea;
    font-family: "Liberation Sans", sans-serif;
    white-space: nowrap;
}
.desktop{
    height: 30px;
    flex: none;
    border: solid #1d3b57;
    border-width: 2px 0px 0px 1px;
    background: #fff;
    box-shadow: inset 0px 1px #7d9dbb;
}
```
